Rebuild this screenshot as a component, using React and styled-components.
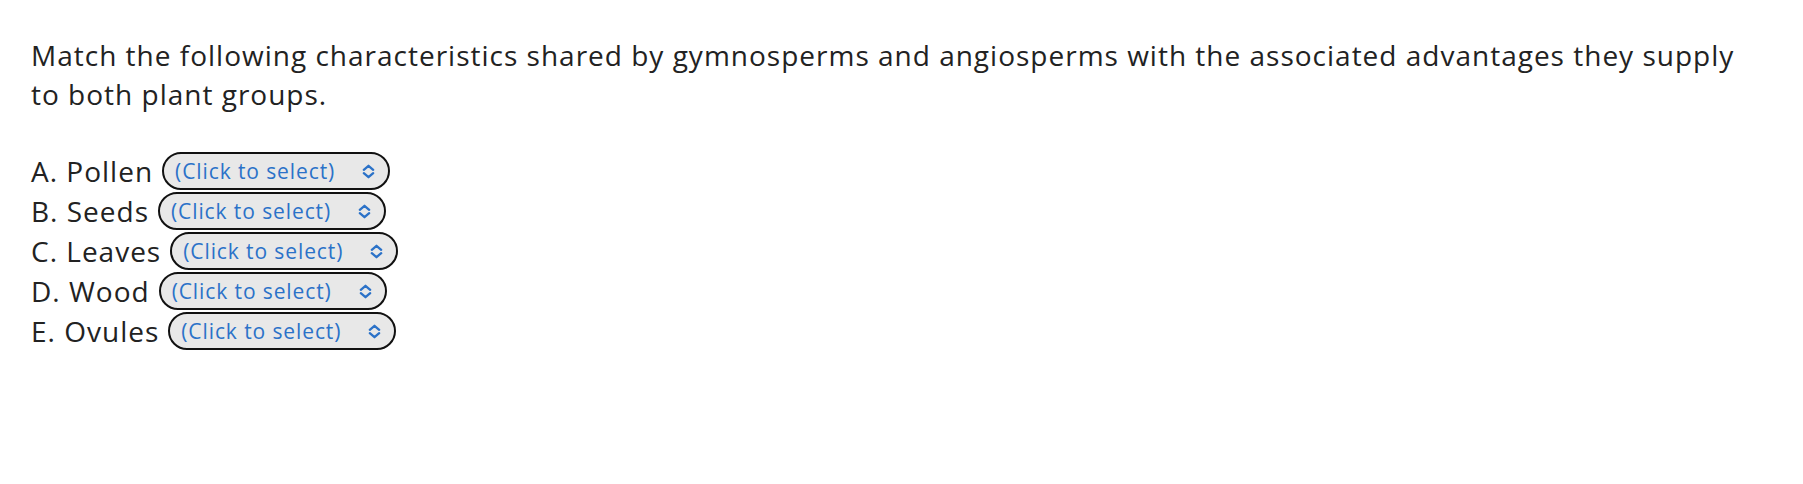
import styled, { createGlobalStyle } from "styled-components";

const Global = createGlobalStyle`
  body {
    margin: 0;
    background: #ffffff;
    font-family: "Open Sans", "Liberation Sans", sans-serif;
    color: #222222;
  }
`;

const Page = styled.main`
  padding: 36px 31px;
`;

const Prompt = styled.p`
  margin: 0 0 38px;
  font-size: 28px;
  line-height: 39px;
  letter-spacing: 1px;
  max-width: 1722px;
`;

const List = styled.div`
  display: flex;
  flex-direction: column;
  gap: 2px;
`;

const Row = styled.div`
  display: flex;
  align-items: center;
  gap: 9px;
  font-size: 28px;
  line-height: 38px;
  letter-spacing: 1px;
`;

const Select = styled.button`
  display: flex;
  align-items: center;
  justify-content: space-between;
  width: 228px;
  height: 38px;
  padding: 0 13px 0 11px;
  border: 2px solid #111111;
  border-radius: 19px;
  background: #e8e8e8;
  color: #2b72c8;
  font-family: inherit;
  font-size: 21px;
  letter-spacing: 0.9px;
  cursor: pointer;
`;

const Chevrons = () => (
  <svg width="13" height="15" viewBox="0 0 13 15" fill="none" stroke="#2b72c8" strokeWidth="2.3" strokeLinecap="round" strokeLinejoin="round">
    <path d="M1.8 5.8 L6.5 1.8 L11.2 5.8" />
    <path d="M1.8 9.2 L6.5 13.2 L11.2 9.2" />
  </svg>
);

const items = ["A. Pollen", "B. Seeds", "C. Leaves", "D. Wood", "E. Ovules"];

export default function App() {
  return (
    <Page>
      <Global />
      <Prompt>
        Match the following characteristics shared by gymnosperms and angiosperms with the associated advantages they supply to both plant groups.
      </Prompt>
      <List>
        {items.map((label) => (
          <Row key={label}>
            <span>{label}</span>
            <Select type="button">
              <span>(Click to select)</span>
              <Chevrons />
            </Select>
          </Row>
        ))}
      </List>
    </Page>
  );
}
